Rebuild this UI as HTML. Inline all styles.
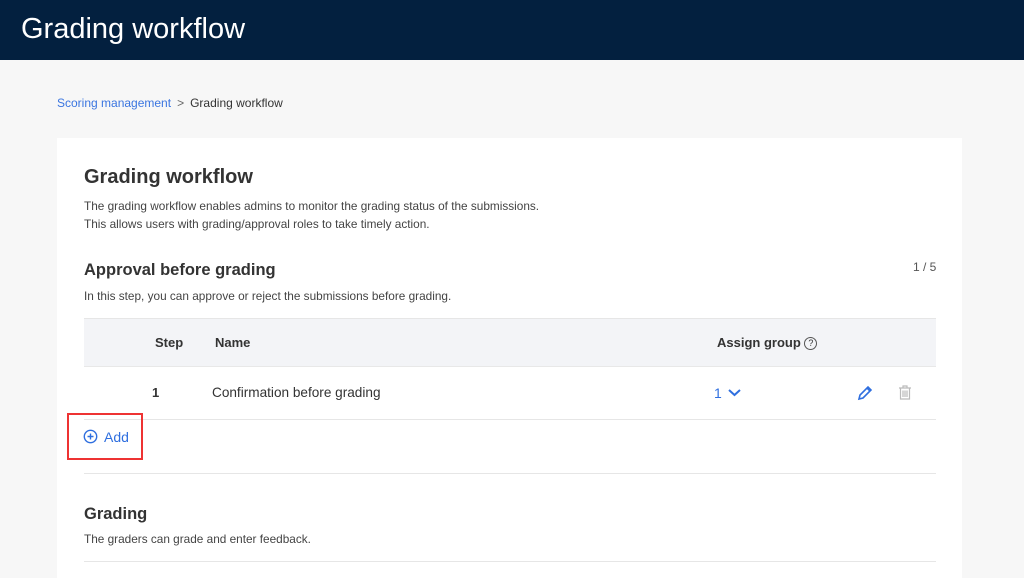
<!DOCTYPE html>
<html><head><style>
body{margin:0;width:1024px;height:568px;overflow:hidden;background:#f7f7f7;font-family:"Liberation Sans",Arial,sans-serif;position:relative}
.hdr{position:absolute;left:0;top:0;width:1024px;height:60px;background:#03203f;color:#fff;font-size:29px;line-height:58px;padding-left:21px;box-sizing:border-box}
.bc{position:absolute;left:57px;top:96px;font-size:12px;color:#333}
.bc a{color:#3a75e0}
.card{position:absolute;left:57px;top:138px;width:905px;height:440px;background:#fff}
.t{position:absolute;color:#333;white-space:nowrap}
.line{position:absolute;left:84px;width:852px;height:1px;background:#e6e6e6}
</style></head><body>
<div class="hdr">Grading workflow</div>
<div class="bc"><a>Scoring management</a><span style="color:#666;margin:0 6px">&gt;</span>Grading workflow</div>
<div class="card"></div>
<div class="t" style="left:84px;top:166px;font-size:20px;font-weight:bold">Grading workflow</div>
<div class="t" style="left:84px;top:197px;font-size:11.8px;line-height:18px;color:#444">The grading workflow enables admins to monitor the grading status of the submissions.<br>This allows users with grading/approval roles to take timely action.</div>
<div class="t" style="left:84px;top:261px;font-size:16.5px;font-weight:bold">Approval before grading</div>
<div class="t" style="left:913px;top:260px;font-size:12px;color:#555">1 / 5</div>
<div class="t" style="left:84px;top:289px;font-size:11.8px;color:#444">In this step, you can approve or reject the submissions before grading.</div>
<div style="position:absolute;left:84px;top:318px;width:852px;height:47px;background:#f3f4f7;border-top:1px solid #e6e6e6;border-bottom:1px solid #e8e8e8"></div>
<div class="t" style="left:155px;top:335px;font-size:13px;font-weight:bold">Step</div>
<div class="t" style="left:215px;top:335px;font-size:13px;font-weight:bold">Name</div>
<div class="t" style="left:717px;top:335px;font-size:13px;font-weight:bold">Assign group <span style="display:inline-block;width:11px;height:11px;border:1px solid #555;border-radius:50%;font-size:9px;line-height:11px;text-align:center;vertical-align:1px;font-weight:normal">?</span></div>
<div class="t" style="left:152px;top:385px;font-size:13px;font-weight:bold">1</div>
<div class="t" style="left:212px;top:385px;font-size:13.6px;color:#333">Confirmation before grading</div>
<div class="t" style="left:714px;top:385px;font-size:14px;color:#2f6fdf">1</div>
<svg style="position:absolute;left:728px;top:388px" width="13" height="9"><path d="M1 2 L6.5 7 L12 2" stroke="#2f6fdf" stroke-width="2" fill="none"/></svg>
<svg style="position:absolute;left:857px;top:385px" width="16" height="16"><path d="M2 14 L3 10 L11 2 L14 5 L6 13 Z" stroke="#2f6fdf" stroke-width="1.6" fill="none"/><path d="M10 3 L13 6" stroke="#2f6fdf" stroke-width="1.6"/></svg>
<svg style="position:absolute;left:898px;top:385px" width="14" height="15"><path d="M1 3H13M5 3V1H9V3M2.5 3V14H11.5V3M5 5.5V12M7 5.5V12M9 5.5V12" stroke="#bbb" stroke-width="1.2" fill="none"/></svg>
<div class="line" style="top:419px"></div>
<div style="position:absolute;left:67px;top:413px;width:76px;height:47px;border:2px solid #e33;box-sizing:border-box"></div>
<svg style="position:absolute;left:83px;top:429px" width="15" height="15"><circle cx="7.5" cy="7.5" r="6.2" stroke="#2f6fdf" stroke-width="1.4" fill="none"/><path d="M7.5 4.5V10.5M4.5 7.5H10.5" stroke="#2f6fdf" stroke-width="1.4"/></svg>
<div class="t" style="left:104px;top:429px;font-size:14px;color:#2f6fdf">Add</div>
<div class="line" style="top:473px"></div>
<div class="t" style="left:84px;top:505px;font-size:16.5px;font-weight:bold">Grading</div>
<div class="t" style="left:84px;top:532px;font-size:11.8px;color:#444">The graders can grade and enter feedback.</div>
<div class="line" style="top:561px"></div>
</body></html>
